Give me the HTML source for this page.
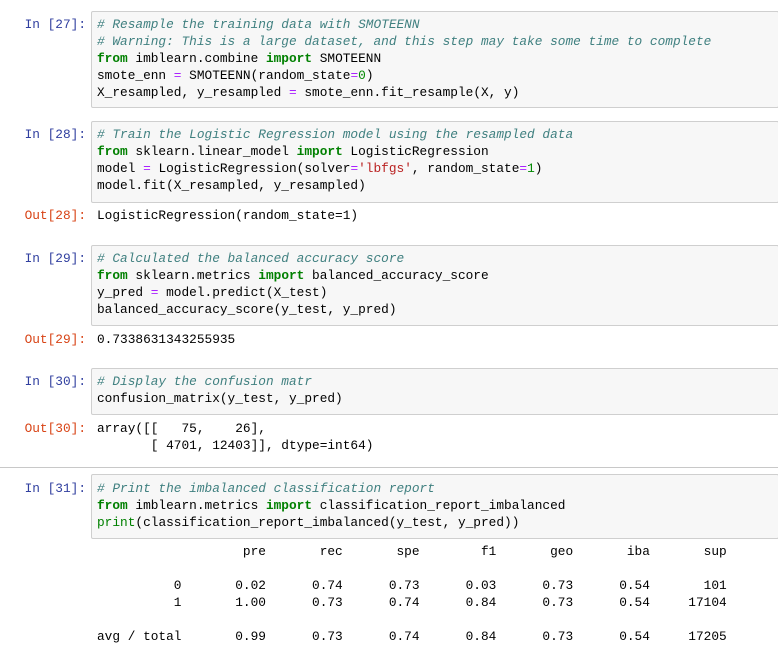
<!DOCTYPE html>
<html><head><meta charset="utf-8"><style>
body{margin:0;background:#fff;width:778px;height:666px;overflow:hidden;position:relative;font-family:"Liberation Mono",monospace;font-size:12.8px;}
.p{position:absolute;left:0;width:86px;text-align:right;line-height:17px;white-space:pre}
.in{color:#303f9f}.out{color:#d84315}
.box{position:absolute;left:91px;width:686px;background:#f7f7f7;border:1px solid #cfcfcf;border-radius:2px}
pre{position:absolute;left:97px;margin:0;font-family:inherit;font-size:inherit;line-height:17px;color:#000}
.c{color:#408080;font-style:italic}.k{color:#008000;font-weight:bold}.o{color:#aa22ff}.n{color:#008800}.s{color:#ba2121}
.sep{position:absolute;left:0;width:778px;top:467px;height:1px;background:#c8c8c8}
</style></head><body>

<div class="box" style="top:11px;height:95px"></div>
<div class="p in" style="top:16px">In [27]:</div>
<pre style="top:16px"><span class="c"># Resample the training data with SMOTEENN</span>
<span class="c"># Warning: This is a large dataset, and this step may take some time to complete</span>
<span class="k">from</span> imblearn.combine <span class="k">import</span> SMOTEENN
smote_enn <span class="o">=</span> SMOTEENN(random_state<span class="o">=</span><span class="n">0</span>)
X_resampled, y_resampled <span class="o">=</span> smote_enn.fit_resample(X, y)</pre>

<div class="box" style="top:121px;height:80px"></div>
<div class="p in" style="top:126px">In [28]:</div>
<pre style="top:126px"><span class="c"># Train the Logistic Regression model using the resampled data</span>
<span class="k">from</span> sklearn.linear_model <span class="k">import</span> LogisticRegression
model <span class="o">=</span> LogisticRegression(solver<span class="o">=</span><span class="s">'lbfgs'</span>, random_state<span class="o">=</span><span class="n">1</span>)
model.fit(X_resampled, y_resampled)</pre>
<div class="p out" style="top:207px">Out[28]:</div>
<pre style="top:207px">LogisticRegression(random_state=1)</pre>

<div class="box" style="top:245px;height:79px"></div>
<div class="p in" style="top:250px">In [29]:</div>
<pre style="top:250px"><span class="c"># Calculated the balanced accuracy score</span>
<span class="k">from</span> sklearn.metrics <span class="k">import</span> balanced_accuracy_score
y_pred <span class="o">=</span> model.predict(X_test)
balanced_accuracy_score(y_test, y_pred)</pre>
<div class="p out" style="top:331px">Out[29]:</div>
<pre style="top:331px">0.7338631343255935</pre>

<div class="box" style="top:368px;height:45px"></div>
<div class="p in" style="top:373px">In [30]:</div>
<pre style="top:373px"><span class="c"># Display the confusion matr</span>
confusion_matrix(y_test, y_pred)</pre>
<div class="p out" style="top:420px">Out[30]:</div>
<pre style="top:420px">array([[   75,    26],
       [ 4701, 12403]], dtype=int64)</pre>

<div class="sep"></div>

<div class="box" style="top:474px;height:63px"></div>
<div class="p in" style="top:480px">In [31]:</div>
<pre style="top:480px"><span class="c"># Print the imbalanced classification report</span>
<span class="k">from</span> imblearn.metrics <span class="k">import</span> classification_report_imbalanced
<span style="color:#008000">print</span>(classification_report_imbalanced(y_test, y_pred))</pre>
<pre style="top:543px">                   pre       rec       spe        f1       geo       iba       sup

          0       0.02      0.74      0.73      0.03      0.73      0.54       101
          1       1.00      0.73      0.74      0.84      0.73      0.54     17104

avg / total       0.99      0.73      0.74      0.84      0.73      0.54     17205</pre>
</body></html>
